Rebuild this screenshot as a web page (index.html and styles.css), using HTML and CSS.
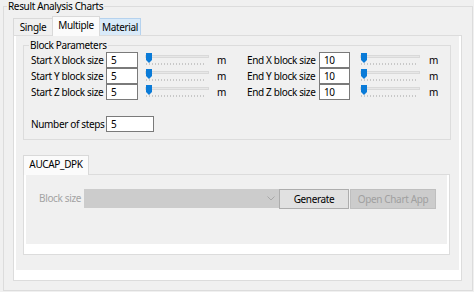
FILE: index.html
```html
<!DOCTYPE html>
<html>
<head>
<meta charset="utf-8">
<link rel="stylesheet" href="styles.css">
</head>
<body>
<div class="outer">
  <div class="legend">Result Analysis Charts</div>
  <div class="tabs main-tabs">
    <div class="tabstrip">
      <div class="tab t-single">Single</div>
      <div class="tab t-multiple active">Multiple</div>
      <div class="tab t-material hover">Material</div>
    </div>
    <div class="tabbody">
      <div class="page">
        <div class="group">
          <div class="group-title">Block Parameters</div>
          <div class="params">
            <span class="lbl">Start X block size</span><span class="tb">5</span>
            <svg class="slider sl-left" width="64" height="16" viewBox="0 0 64 16"><rect x="0.5" y="3.5" width="63" height="2" fill="#e7e7e7" stroke="#d9d9d9"/><line x1="1" y1="12" x2="61" y2="12" stroke="#c8c8c8" stroke-width="2" stroke-dasharray="1 2"/><path d="M1 1 H7 V8 L4 11 L1 8 Z" fill="#0a7bd8"/></svg>
            <span class="unit">m</span>
            <span class="lbl">End X block size</span><span class="tb">10</span>
            <svg class="slider sl-right" width="60" height="16" viewBox="0 0 60 16"><rect x="0.5" y="3.5" width="59" height="2" fill="#e7e7e7" stroke="#d9d9d9"/><line x1="1" y1="12" x2="58" y2="12" stroke="#c8c8c8" stroke-width="2" stroke-dasharray="1 2"/><path d="M1 1 H7 V8 L4 11 L1 8 Z" fill="#0a7bd8"/></svg>
            <span class="unit">m</span>

            <span class="lbl">Start Y block size</span><span class="tb">5</span>
            <svg class="slider sl-left" width="64" height="16" viewBox="0 0 64 16"><rect x="0.5" y="3.5" width="63" height="2" fill="#e7e7e7" stroke="#d9d9d9"/><line x1="1" y1="12" x2="61" y2="12" stroke="#c8c8c8" stroke-width="2" stroke-dasharray="1 2"/><path d="M1 1 H7 V8 L4 11 L1 8 Z" fill="#0a7bd8"/></svg>
            <span class="unit">m</span>
            <span class="lbl">End Y block size</span><span class="tb">10</span>
            <svg class="slider sl-right" width="60" height="16" viewBox="0 0 60 16"><rect x="0.5" y="3.5" width="59" height="2" fill="#e7e7e7" stroke="#d9d9d9"/><line x1="1" y1="12" x2="58" y2="12" stroke="#c8c8c8" stroke-width="2" stroke-dasharray="1 2"/><path d="M1 1 H7 V8 L4 11 L1 8 Z" fill="#0a7bd8"/></svg>
            <span class="unit">m</span>

            <span class="lbl">Start Z block size</span><span class="tb">5</span>
            <svg class="slider sl-left" width="64" height="16" viewBox="0 0 64 16"><rect x="0.5" y="3.5" width="63" height="2" fill="#e7e7e7" stroke="#d9d9d9"/><line x1="1" y1="12" x2="61" y2="12" stroke="#c8c8c8" stroke-width="2" stroke-dasharray="1 2"/><path d="M1 1 H7 V8 L4 11 L1 8 Z" fill="#0a7bd8"/></svg>
            <span class="unit">m</span>
            <span class="lbl">End Z block size</span><span class="tb">10</span>
            <svg class="slider sl-right" width="60" height="16" viewBox="0 0 60 16"><rect x="0.5" y="3.5" width="59" height="2" fill="#e7e7e7" stroke="#d9d9d9"/><line x1="1" y1="12" x2="58" y2="12" stroke="#c8c8c8" stroke-width="2" stroke-dasharray="1 2"/><path d="M1 1 H7 V8 L4 11 L1 8 Z" fill="#0a7bd8"/></svg>
            <span class="unit">m</span>
          </div>
          <div class="steps">
            <span class="lbl">Number of steps</span><span class="tb tb-wide">5</span>
          </div>
        </div>

        <div class="tabs sub-tabs">
          <div class="tabstrip sub-strip">
            <div class="tab t-aucap active">AUCAP_DPK</div>
          </div>
          <div class="tabbody sub-body">
            <div class="page sub-page">
              <div class="chart-row">
                <span class="lbl disabled">Block size</span>
                <div class="combo">
                  <svg class="chev" width="8" height="5" viewBox="0 0 8 5"><path d="M0.5 0.5 L4 4 L7.5 0.5" fill="none" stroke="#a8a8a8" stroke-width="1"/></svg>
                </div>
                <div class="btn">Generate</div>
                <div class="btn btn-disabled">Open Chart App</div>
              </div>
            </div>
          </div>
        </div>
      </div>
    </div>
  </div>
</div>
</body>
</html>
```
FILE: styles.css
```css
* { box-sizing: border-box; }
html, body { margin: 0; padding: 0; }
body {
  background: #f0f0f0;
  width: 474px;
  height: 292px;
  overflow: hidden;
  font-family: "Noto Sans", "Open Sans", sans-serif;
  font-size: 10px;
  letter-spacing: -0.35px;
  color: #000;
}
.outer {
  margin: 6px 0 0 3px;
  width: 470px;
  height: 285px;
  border: 1px solid #dcdcdc;
  padding-left: 9px;
}
.legend {
  width: fit-content;
  margin: -8px 0 0 -6px;
  padding: 0 1px;
  height: 15px;
  line-height: 15px;
  background: #f0f0f0;
}
.main-tabs { margin-top: 2px; width: 449px; }
.tabs { display: flex; flex-direction: column; }
.tabstrip {
  display: flex;
  align-items: flex-end;
  height: 19px;
}
.tab {
  height: 17px;
  line-height: 16px;
  border: 1px solid #d9d9d9;
  border-bottom: none;
  background: #f0f0f0;
  text-align: center;
  white-space: nowrap;
}
.tab.active {
  height: 20px;
  margin-bottom: -1px;
  background: #fbfbfb;
  position: relative;
  z-index: 1;
  line-height: 17px;
}
.tab.hover { background: #d9eaf9; border-color: #b5d2ee; }
.t-single { width: 39px; border-right: none; }
.t-multiple { width: 48px; }
.t-material { width: 41px; border-left: none; }
.tabbody {
  border: 1px solid #dcdcdc;
  background: #fff;
  height: 246px;
  padding: 0 2px 10px 2px;
  display: flex;
}
.page {
  flex: 1;
  background: #f0f0f0;
  display: flex;
  flex-direction: column;
}
.group {
  margin: 9px 8px 0 7px;
  border: 1px solid #dcdcdc;
  padding: 0 0 7px 7px;
}
.group-title {
  width: fit-content;
  margin: -8px 0 0 -2px;
  padding: 0 1px;
  height: 14px;
  line-height: 14px;
  background: #f0f0f0;
}
.params {
  display: grid;
  grid-template-columns: 75px 32px 79px 30px 72px 31px 79px auto;
  grid-auto-rows: 16px;
  align-items: center;
}
.lbl { white-space: nowrap; line-height: 16px; }
.tb {
  height: 16px;
  border: 1px solid #7a7a7a;
  background: #fff;
  padding-left: 4px;
  line-height: 14px;
}
.tb-wide { width: 48px; }
.slider { display: block; align-self: start; }
.sl-left { margin-left: 7px; }
.sl-right { margin-left: 10px; }
.unit { line-height: 15px; }
.steps {
  display: grid;
  grid-template-columns: 75px 48px;
  align-items: center;
  margin-top: 16px;
}
.sub-tabs { margin: 17px 0 0 7px; width: 427px; }
.sub-strip { height: 17px; }
.t-aucap { width: 66px; height: 17px; line-height: 15px; }
.sub-body { height: 81px; }
.sub-page { padding: 14px 0 0 13px; }
.chart-row { display: flex; align-items: flex-start; }
.disabled { color: #a3a3a3; width: 45px; line-height: 19px; }
.combo {
  width: 195px;
  height: 19px;
  background: #cccccc;
  border: 1px solid #cccccc;
  display: flex;
  align-items: center;
  justify-content: flex-end;
  padding-right: 3px;
}
.chev { display: block; }
.btn {
  height: 20px;
  line-height: 18px;
  border: 1px solid #adadad;
  background: #e1e1e1;
  text-align: center;
  white-space: nowrap;
  width: 70px;
}
.btn-disabled {
  width: 86px;
  margin-left: 1px;
  background: #cccccc;
  border-color: #bfbfbf;
  color: #a0a0a0;
}
```
